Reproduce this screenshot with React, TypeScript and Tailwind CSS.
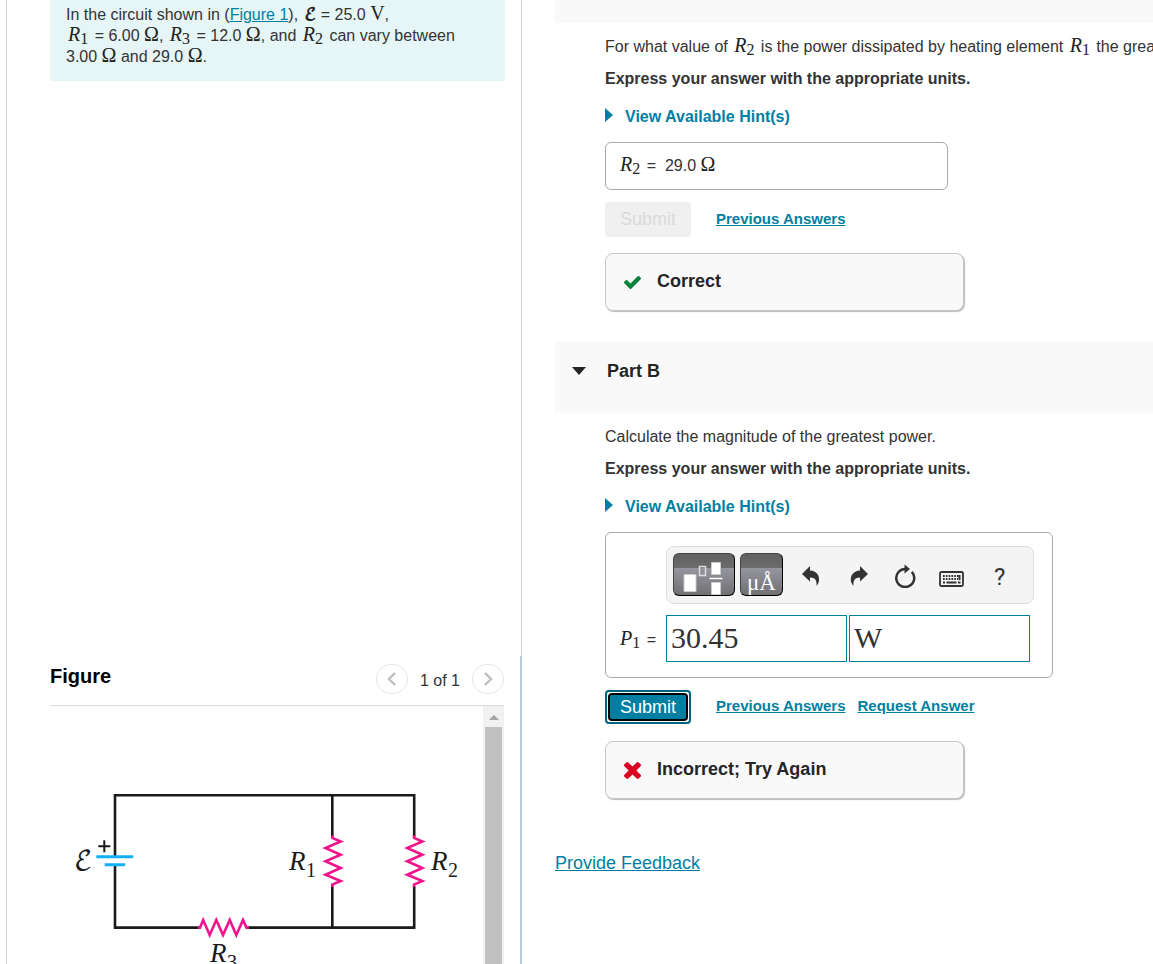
import { useState, type ReactNode } from "react";

function Sym({ name, sub }: { name: string; sub?: string }) {
  return (
    <span className="mx-0.5 font-['Liberation_Serif',serif] text-[20px] leading-[0] text-[#222]">
      <i>{name}</i>
      {sub && <span className="relative top-[3px] text-[16px]">{sub}</span>}
    </span>
  );
}

function Unit({ children }: { children: ReactNode }) {
  return (
    <span className="font-['Liberation_Serif',serif] text-[20px] leading-[0] text-[#222]">{children}</span>
  );
}

function HintButton() {
  return (
    <button type="button" className="flex h-5 items-center gap-3 font-bold text-[#007fa3]">
      <svg viewBox="0 0 8 14" className="mb-1 h-3.5 w-2" aria-hidden="true">
        <path d="M0 0 8 7 0 14z" fill="currentColor" />
      </svg>
      View Available Hint(s)
    </button>
  );
}

function TextLink({ children }: { children: ReactNode }) {
  return (
    <a href="#" className="text-[15px] font-bold text-[#007fa3] underline">
      {children}
    </a>
  );
}

function CheckIcon() {
  return (
    <svg viewBox="121 334 1550 1188" className="h-[13px] w-[17px]" aria-hidden="true">
      <path
        fill="#038238"
        d="M1671 566q0 40-28 68l-724 724-136 136q-28 28-68 28t-68-28l-136-136-362-362q-28-28-28-68t28-68l136-136q28-28 68-28t68 28l294 295 656-657q28-28 68-28t68 28l136 136q28 28 28 68z"
      />
    </svg>
  );
}

function CrossIcon() {
  return (
    <svg viewBox="302 366 1188 1188" className="h-[17px] w-[17px]" aria-hidden="true">
      <path
        fill="#db0020"
        d="M1490 1322q0 40-28 68l-136 136q-28 28-68 28t-68-28l-294-294-294 294q-28 28-68 28t-68-28l-136-136q-28-28-28-68t28-68l294-294-294-294q-28-28-28-68t28-68l136-136q28-28 68-28t68 28l294 294 294-294q28-28 68-28t68 28l136 136q28 28 28 68t-28 68l-294 294 294 294q28 28 28 68z"
      />
    </svg>
  );
}

function Circuit() {
  return (
    <svg
      viewBox="50 706 433 258"
      preserveAspectRatio="xMinYMin slice"
      className="h-full min-w-0 flex-1"
      role="img"
      aria-label="Circuit diagram"
    >
      <g fill="none" stroke="#1a1a1a" strokeWidth="2.6">
        <path d="M115 856V795.3H414.2V837M332.3 795.3V837M115 866V927.6H199M247 927.6H414.2V886M332.3 886V927.6" />
        <path d="M98.3 846.3H110.3M104.3 840.3V852.3" strokeWidth="2" />
      </g>
      <g fill="none" stroke="#14b0f5" strokeWidth="3">
        <path d="M96.3 856.7H133.3M104.7 864.8H125.2" />
      </g>
      <g fill="none" stroke="#f0148c" strokeWidth="2.6">
        <path d="M332.3 835.5V838L340.7 841.5 325.5 848 340.7 854.7 325.5 861.3 340.7 868 325.5 874.7 340.7 881 332.3 884.5V887" />
        <path d="M414 835.5V838L422.4 841.5 407.2 848 422.4 854.7 407.2 861.3 422.4 868 407.2 874.7 422.4 881 414 884.5V887" />
        <path d="M197.8 927.6H200L203.2 920 209.7 935 216.3 920 223 935 229.7 920 236.3 935 243 920 246.5 927.6H249" />
      </g>
      <g fill="#1a1a1a" fontFamily="'Liberation Serif', serif" fontSize="27">
        <text x="74" y="870" fontFamily="'DejaVu Math TeX Gyre', 'DejaVu Serif', serif">ℰ</text>
        <text x="289" y="870" fontStyle="italic">R</text>
        <text x="306" y="877" fontSize="20">1</text>
        <text x="431" y="870" fontStyle="italic">R</text>
        <text x="448" y="877" fontSize="20">2</text>
        <text x="210" y="962" fontStyle="italic">R</text>
        <text x="227" y="969" fontSize="20">3</text>
      </g>
    </svg>
  );
}

function PageButton({ label, d }: { label: string; d: string }) {
  return (
    <button
      type="button"
      aria-label={label}
      className="flex h-[30px] w-8 items-center justify-center rounded-full border border-[#e6e6e6]"
    >
      <svg viewBox="0 0 10 14" className="h-3.5 w-2.5" fill="none" stroke="#bdbdbd" strokeWidth="2.4" aria-hidden="true">
        <path d={d} />
      </svg>
    </button>
  );
}

function LeftPane() {
  return (
    <aside className="ml-1.5 flex h-full min-w-0 flex-col border-l border-[#d0d4d8]">
      <div className="min-h-0 flex-1 border-r border-[#ccd6e0] pl-[43px] pr-4">
        <p className="bg-[#e6f6f6] px-4 pb-[14px] pt-1 leading-[21px]">
          In the circuit shown in (
          <a href="#figure" className="text-[#007fa3] underline">Figure 1</a>
          ),{" "}
          <span className="ml-0.5 font-['DejaVu_Math_TeX_Gyre','DejaVu_Serif',serif] text-[17px] font-bold leading-[0] text-[#222]">
            ℰ
          </span>
          {" = 25.0 "}
          <Unit>V</Unit>,
          <br />
          <Sym name="R" sub="1" /> = 6.00 <Unit>Ω</Unit>, <Sym name="R" sub="3" /> = 12.0 <Unit>Ω</Unit>, and{" "}
          <Sym name="R" sub="2" /> can vary between
          <br />
          3.00 <Unit>Ω</Unit> and 29.0 <Unit>Ω</Unit>.
        </p>
      </div>

      <section id="figure" className="flex h-[308px] flex-col border-r-2 border-[#b8cbdf] pl-[43px] pr-4">
        <header className="flex h-[50px] shrink-0 items-center justify-between border-b border-[#dcdcdc]">
          <h2 className="pb-2.5 text-[20px] font-bold text-black">Figure</h2>
          <div className="flex items-center gap-3 pb-1">
            <PageButton label="Previous figure" d="M8 1 2 7 8 13" />
            <span className="pt-1">1 of 1</span>
            <PageButton label="Next figure" d="M2 1 8 7 2 13" />
          </div>
        </header>
        <div className="flex min-h-0 flex-1 overflow-hidden">
          <Circuit />
          <div className="flex w-[21px] shrink-0 flex-col items-center bg-[#f1f1f1]">
            <svg viewBox="0 0 10 21" className="h-[21px] w-2.5 shrink-0" aria-hidden="true">
              <path d="M0 14 5 9 10 14z" fill="#a3a3a3" />
            </svg>
            <div className="w-[17px] flex-1 bg-[#c1c1c1]" />
          </div>
        </div>
      </section>
    </aside>
  );
}

const glossy =
  "flex h-[43px] items-center justify-center rounded-md border border-[#444] border-b-black border-r-black bg-[linear-gradient(#606060,#6c6c6c_34%,#95959f_35%,#707074)]";

function MathToolbar() {
  return (
    <div className="flex h-[58px] items-center rounded-lg border border-[#dedede] bg-[#f4f4f4] pb-0.5 pl-1.5 text-[#333]">
      <button type="button" aria-label="Templates" className={`${glossy} w-[62px]`}>
        <svg viewBox="0 0 60 41" className="h-[41px] w-[60px]" aria-hidden="true">
          <g fill="#fff" stroke="#ccc">
            <path d="M10 20.5h12v17H10zM37.500 8.500h9v12h-9zM37.500 28.500h9v12h-9z" />
          </g>
          <path d="M25.500 12.500h6v9h-6z" fill="none" stroke="#ddd" strokeWidth="1.500" />
          <path d="M35.500 24.500h13" stroke="#fff" strokeWidth="1.500" />
        </svg>
      </button>
      <button
        type="button"
        aria-label="Units"
        className={`${glossy} ml-[5px] w-[43px] pt-4 font-['Liberation_Serif',serif] text-[23px] leading-none text-white`}
      >
        μÅ
      </button>
      <button type="button" aria-label="Undo" className="ml-[19px] pt-1">
        <svg viewBox="0 0 18 20" className="h-5 w-[18px]" fill="currentColor" aria-hidden="true">
          <path d="M0 8 8 0V4.500C14.500 5 17.500 9 17 14.500 16.700 17 15.500 19 14.500 19.800 15 15 13.500 11.500 8 11.500V15.500z" />
        </svg>
      </button>
      <button type="button" aria-label="Redo" className="ml-[30px] pt-1">
        <svg viewBox="0 0 18 20" className="h-5 w-[18px]" fill="currentColor" aria-hidden="true">
          <path d="M18 8 10 0V4.500C3.500 5 .5 9 .8 14.500 1.200 17 2.500 19 3.500 19.800 3 15 4.500 11.500 10 11.500V15.500z" />
        </svg>
      </button>
      <button type="button" aria-label="Reset" className="ml-[26px] pt-1">
        <svg viewBox="0 0 22 24" className="h-6 w-[22px]" aria-hidden="true">
          <path d="M12 5A9 9 0 1 0 17.800 7.800" fill="none" stroke="currentColor" strokeWidth="2.500" />
          <path d="M10.500 .5 16 5 10.500 9.500z" fill="currentColor" />
        </svg>
      </button>
      <button type="button" aria-label="Keyboard" className="ml-[23px] pt-2.5">
        <svg viewBox="0 0 25 16" className="h-4 w-[25px]" fill="none" stroke="currentColor" aria-hidden="true">
          <rect x="1" y="1" width="23" height="14" rx="1.500" strokeWidth="1.800" />
          <path d="M4 5H21M4 8H19" strokeWidth="2" strokeDasharray="1.700 1.100" />
          <path d="M20.500 4V9M4 11.500H6M7.500 11.500H17.500M19 11.500H21.500" strokeWidth="2" />
        </svg>
      </button>
      <button type="button" aria-label="Help" className="ml-[30px] pt-1.5 font-[Roboto,sans-serif] text-[24px] leading-none">
        ?
      </button>
    </div>
  );
}

function Result({ icon, children }: { icon: ReactNode; children: ReactNode }) {
  return (
    <div className="flex min-h-[58px] w-[359px] items-center gap-4 rounded-lg border border-[#c7c7c7] bg-[#f9f9f9] pl-[18px] text-[18px] font-bold text-[#252525] shadow-[1px_1px_1px_#bbb]">
      {icon}
      <p className="pb-0.5">{children}</p>
    </div>
  );
}

function PartB() {
  const [value, setValue] = useState("30.45");
  const [unit, setUnit] = useState("W");
  const field =
    "h-[47px] w-[181px] border border-[#007fa3] px-1 pb-0.5 font-['Liberation_Serif',serif] text-[30px] text-[#333] outline-none";

  return (
    <section>
      <header className="flex h-[71px] items-start bg-[#f9f9f9] pl-[17px] pt-4">
        <button type="button" className="flex items-center gap-[21px] text-[18px] font-bold text-[#252525]">
          <svg viewBox="0 0 14 8" className="mb-0.5 h-2 w-3.5" aria-hidden="true">
            <path d="M0 0H14L7 8z" fill="currentColor" />
          </svg>
          Part B
        </button>
      </header>
      <div className="pl-[50px] pt-3">
        <p className="leading-6">Calculate the magnitude of the greatest power.</p>
        <p className="mt-2 font-bold leading-6">Express your answer with the appropriate units.</p>
        <div className="mt-4">
          <HintButton />
        </div>
        <div className="mt-[15px] flex h-[146px] w-[448px] items-end rounded-md border border-[#a9a9a9] pb-[15px] pl-3">
          <label htmlFor="magnitude" className="w-[48px] whitespace-nowrap pb-2.5">
            <Sym name="P" sub="1" /> =
          </label>
          <div className="w-[368px]">
            <MathToolbar />
            <div className="mt-[11px] flex gap-0.5">
              <input id="magnitude" className={field} value={value} onChange={(e) => setValue(e.target.value)} />
              <input aria-label="Units" className={field} value={unit} onChange={(e) => setUnit(e.target.value)} />
            </div>
          </div>
        </div>
        <div className="mb-[17px] mt-3 flex items-center">
          <button
            type="submit"
            className="h-[34px] w-[86px] rounded-sm border-2 border-[#006380] bg-white p-px text-[18px] text-white"
          >
            <span className="flex h-full items-center justify-center rounded-sm border-2 border-black bg-[#007fa3]">
              Submit
            </span>
          </button>
          <div className="ml-[25px] flex gap-3 pb-0.5">
            <TextLink>Previous Answers</TextLink>
            <TextLink>Request Answer</TextLink>
          </div>
        </div>
        <Result icon={<CrossIcon />}>Incorrect; Try Again</Result>
      </div>
    </section>
  );
}

export default function App() {
  return (
    <div className="grid h-screen grid-cols-[522fr_631fr] overflow-hidden bg-white font-['Liberation_Sans',Arial,sans-serif] text-[16px] text-[#333]">
      <LeftPane />
      <main className="min-w-0 overflow-hidden pl-[33px]">
        <div className="h-[23px] bg-[#f9f9f9]" />
        <section className="pl-[50px] pt-3">
          <p className="whitespace-nowrap leading-6">
            For what value of <Sym name="R" sub="2" /> is the power dissipated by heating element{" "}
            <Sym name="R" sub="1" /> the greatest?
          </p>
          <p className="mt-2 font-bold leading-6">Express your answer with the appropriate units.</p>
          <div className="mt-4">
            <HintButton />
          </div>
          <div className="mt-[15px] flex h-12 w-[343px] items-center rounded-md border border-[#a9a9a9] pl-3">
            <p className="leading-6">
              <Sym name="R" sub="2" /> = &nbsp;29.0 <Unit>Ω</Unit>
            </p>
          </div>
          <div className="mb-4 mt-3 flex items-center">
            <button type="submit" disabled className="h-[35px] w-[86px] rounded-sm bg-[#f0f0f0] text-[18px] text-[#dadada]">
              Submit
            </button>
            <div className="ml-[25px] pb-0.5">
              <TextLink>Previous Answers</TextLink>
            </div>
          </div>
          <Result icon={<CheckIcon />}>Correct</Result>
        </section>
        <div className="mt-[31px]">
          <PartB />
        </div>
        <a href="#" className="mt-[51px] inline-block text-[18px] text-[#007fa3] underline">
          Provide Feedback
        </a>
      </main>
    </div>
  );
}
